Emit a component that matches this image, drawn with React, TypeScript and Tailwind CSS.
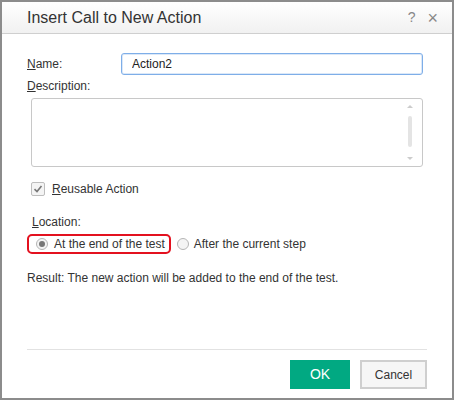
import React, { useState } from 'react';

const font = { fontFamily: '"Liberation Sans", Arial, sans-serif' };

const App: React.FC = () => {
  const [name, setName] = useState('Action2');
  const [reusable, setReusable] = useState(true);
  const [location, setLocation] = useState<'end' | 'after'>('end');

  return (
    <div className="w-[454px] h-[400px] bg-white border-2 border-[#8c8c8c] flex flex-col text-[12px] text-[#333]" style={font}>
      <div className="h-[32px] shrink-0 flex items-center pl-[25px] pr-[14px] border-b border-[#cfcfcf] bg-gradient-to-b from-white to-[#f1f1f1]">
        <span className="text-[16px] text-[#333] flex-1">Insert Call to New Action</span>
        <span className="text-[#888] text-[14px] mr-[12px]">?</span>
        <span className="text-[#888] text-[18px] leading-none">×</span>
      </div>

      <div className="flex-1 flex flex-col pl-[25px] pr-[25px] pt-[19px]">
        <div className="flex items-center h-[22px] mr-[4px]">
          <label className="w-[94px]"><span className="underline">N</span>ame:</label>
          <input
            value={name}
            onChange={(e) => setName(e.target.value)}
            className="flex-1 h-[22px] border border-[#7eaee8] rounded-[3px] px-[10px] text-[12px] text-[#222] outline-none shadow-[inset_0_0_0_1px_#dbe8f8]"
          />
        </div>
        <div className="mt-[2px]"><span className="underline">D</span>escription:</div>
        <div className="ml-[4px] mr-[4px] mt-[3px] h-[69px] border border-[#c8c8c8] rounded-[3px] flex justify-end pr-[9px]">
          <div className="w-[7px] flex flex-col items-center py-[6px]">
            <div className="w-0 h-0 border-l-[3px] border-r-[3px] border-b-[3px] border-l-transparent border-r-transparent border-b-[#ccc]" />
            <div className="w-[4px] h-[31px] bg-[#e4e4e4] rounded-full mt-[8px]" />
            <div className="flex-1" />
            <div className="w-0 h-0 border-l-[3px] border-r-[3px] border-t-[3px] border-l-transparent border-r-transparent border-t-[#ccc]" />
          </div>
        </div>

        <label className="flex items-center ml-[4px] mt-[13px] cursor-pointer" onClick={() => setReusable(!reusable)}>
          <span className="w-[14px] h-[14px] border border-[#bdbdbd] rounded-[2px] bg-[#f4f4f4] flex items-center justify-center">
            {reusable && (
              <svg width="10" height="10" viewBox="0 0 10 10">
                <path d="M1.5 5.2 L4 7.6 L8.5 2" fill="none" stroke="#777" strokeWidth="1.6" />
              </svg>
            )}
          </span>
          <span className="ml-[7px]"><span className="underline">R</span>eusable Action</span>
        </label>

        <div className="ml-[5px] mt-[15px]"><span className="underline">L</span>ocation:</div>

        <div className="flex items-center mt-[3px]">
          <div
            className="flex items-center h-[20px] border-2 border-[#e3111f] rounded-[5px] pl-[7px] pr-[4px] cursor-pointer"
            onClick={() => setLocation('end')}
          >
            <span className="w-[12px] h-[12px] rounded-full border border-[#b5b5b5] bg-[#f4f4f4] flex items-center justify-center">
              {location === 'end' && <span className="w-[6px] h-[6px] rounded-full bg-[#777]" />}
            </span>
            <span className="ml-[6px]">At the end of the test</span>
          </div>
          <div className="flex items-center ml-[6px] cursor-pointer" onClick={() => setLocation('after')}>
            <span className="w-[12px] h-[12px] rounded-full border border-[#b5b5b5] bg-[#f4f4f4] flex items-center justify-center">
              {location === 'after' && <span className="w-[6px] h-[6px] rounded-full bg-[#777]" />}
            </span>
            <span className="ml-[5px]">After the current step</span>
          </div>
        </div>

        <div className="mt-[15px]">Result: The new action will be added to the end of the test.</div>

        <div className="flex-1" />
        <div className="border-t border-[#e2e2e2] pt-[10px] pb-[9px] flex justify-end gap-[10px]">
          <button className="w-[60px] h-[29px] bg-[#01a982] text-white text-[14px]">OK</button>
          <button className="w-[67px] h-[29px] bg-[#f6f6f6] border-2 border-[#cfcfcf] text-[#333] text-[12px]">Cancel</button>
        </div>
      </div>
    </div>
  );
};

export default App;
